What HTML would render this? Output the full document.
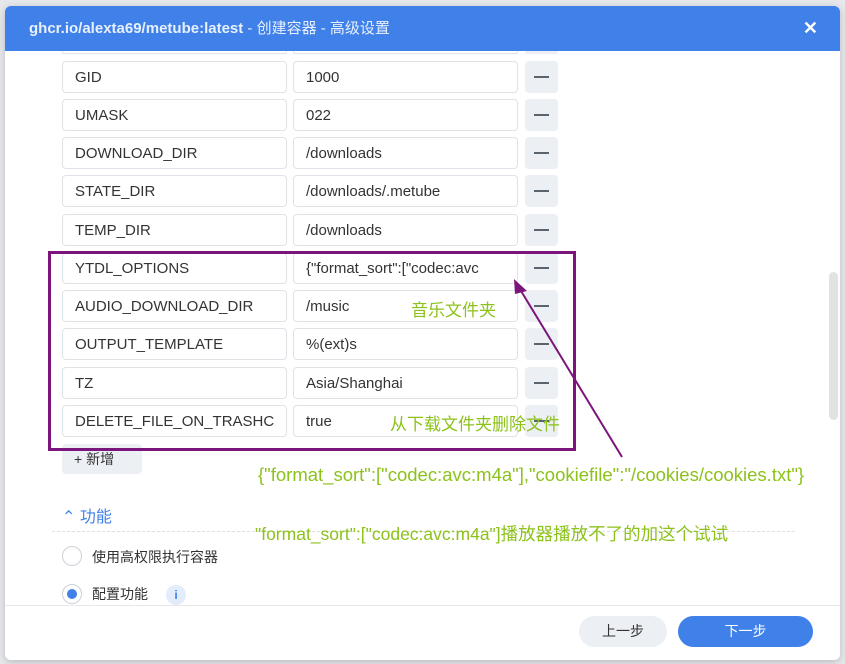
<!DOCTYPE html>
<html><head><meta charset="utf-8"><style>
*{box-sizing:border-box;margin:0;padding:0}
body{width:845px;height:664px;background:#e6e8eb;font-family:"Liberation Sans","Noto Sans CJK SC",sans-serif;position:relative;overflow:hidden}
.dlg{position:absolute;left:5px;top:6px;width:835px;height:654px;background:#fff;border-radius:6px;overflow:hidden;box-shadow:0 2px 8px rgba(0,0,0,.2)}
.hd{height:45px;background:#3f80e9;color:#e8f0fd;font-size:15px;font-weight:bold;line-height:45px;padding-left:24px;position:relative}
.hd .x{position:absolute;right:22px;top:0;font-size:18px;color:#fff}
.in{position:absolute;height:32px;border:1px solid #dfe2e6;border-radius:4px;font-family:"Liberation Sans",sans-serif;font-size:15px;color:#333;line-height:32px;padding-left:12px;overflow:hidden;white-space:nowrap;background:#fff}
.k{left:57px;width:225px}.v{left:288px;width:225px}
.m{position:absolute;left:520px;width:33px;height:32px;background:#eceff3;border-radius:4px}
.m:after{content:"";position:absolute;left:9px;top:15px;width:15px;height:2px;background:#5a636e}
.g{position:absolute;color:#8cc21a;font-size:17px;white-space:nowrap}
.btn{position:absolute;top:610px;height:31px;border-radius:16px;font-size:14px;text-align:center;line-height:31px}
</style></head><body>
<div class="dlg">
<div class="hd">ghcr.io/alexta69/metube:latest <span style="font-weight:normal">- 创建容器 - 高级设置</span><span class="x">✕</span></div>
</div>
<div style="position:absolute;left:0;top:0">
<div class="in k" style="top:51px;height:3px;left:62px;border-top:none"></div>
<div class="in v" style="top:51px;height:3px;left:293px;border-top:none"></div>
<div class="m" style="top:51px;height:3px;left:525px"></div>
</div>
<div style="position:absolute;left:5px;top:0">
<div class="in k" style="top:61px">GID</div><div class="in v" style="top:61px">1000</div><div class="m" style="top:61px"></div>
<div class="in k" style="top:99px">UMASK</div><div class="in v" style="top:99px">022</div><div class="m" style="top:99px"></div>
<div class="in k" style="top:137px">DOWNLOAD_DIR</div><div class="in v" style="top:137px">/downloads</div><div class="m" style="top:137px"></div>
<div class="in k" style="top:175px">STATE_DIR</div><div class="in v" style="top:175px">/downloads/.metube</div><div class="m" style="top:175px"></div>
<div class="in k" style="top:214px">TEMP_DIR</div><div class="in v" style="top:214px">/downloads</div><div class="m" style="top:214px"></div>
<div class="in k" style="top:252px">YTDL_OPTIONS</div><div class="in v" style="top:252px">{"format_sort":["codec:avc</div><div class="m" style="top:252px"></div>
<div class="in k" style="top:290px">AUDIO_DOWNLOAD_DIR</div><div class="in v" style="top:290px">/music</div><div class="m" style="top:290px"></div>
<div class="in k" style="top:328px">OUTPUT_TEMPLATE</div><div class="in v" style="top:328px">%(ext)s</div><div class="m" style="top:328px"></div>
<div class="in k" style="top:367px">TZ</div><div class="in v" style="top:367px">Asia/Shanghai</div><div class="m" style="top:367px"></div>
<div class="in k" style="top:405px">DELETE_FILE_ON_TRASHC</div><div class="in v" style="top:405px">true</div><div class="m" style="top:405px"></div>
</div>
<div style="position:absolute;left:62px;top:444px;width:80px;height:30px;background:#eceff3;border-radius:4px;font-size:14px;color:#333;line-height:30px;padding-left:12px">+ 新增</div>
<div style="position:absolute;left:62px;top:503px;font-size:16px;color:#3f80e9">⌃ 功能</div>
<div style="position:absolute;left:52px;top:531px;width:743px;border-top:1px dashed #dde0e4"></div>
<div style="position:absolute;left:62px;top:546px;width:20px;height:20px;border:1px solid #ccd0d6;border-radius:50%"></div>
<div style="position:absolute;left:92px;top:547px;font-size:14px;color:#333">使用高权限执行容器</div>
<div style="position:absolute;left:62px;top:584px;width:20px;height:20px;border:1px solid #ccd0d6;border-radius:50%"><div style="margin:4px;width:10px;height:10px;border-radius:50%;background:#3f80e9"></div></div>
<div style="position:absolute;left:92px;top:584px;font-size:14px;color:#333">配置功能</div>
<div style="position:absolute;left:166px;top:585px;width:20px;height:20px;border-radius:50%;background:#e3ecfb;color:#3f80e9;font-size:12px;text-align:center;line-height:20px;font-weight:bold">i</div>
<div style="position:absolute;left:5px;top:605px;width:835px;height:55px;background:#fff;border-top:1px solid #e5e7ea;border-radius:0 0 6px 6px"></div>
<div class="btn" style="left:579px;width:88px;background:#eceff3;color:#333;top:616px">上一步</div>
<div class="btn" style="left:678px;width:135px;background:#3f80e9;color:#fff;top:616px">下一步</div>
<div style="position:absolute;left:829px;top:272px;width:9px;height:148px;background:#e2e2e2;border-radius:5px"></div>
<div style="position:absolute;left:48px;top:251px;width:528px;height:200px;border:3px solid #7b157b"></div>
<svg style="position:absolute;left:0;top:0" width="845" height="664"><line x1="622" y1="457" x2="518" y2="286" stroke="#7b157b" stroke-width="2"/><polygon points="514,279 527,291 515,294" fill="#7b157b"/></svg>
<div class="g" style="left:411px;top:296px">音乐文件夹</div>
<div class="g" style="left:390px;top:410px">从下载文件夹删除文件</div>
<div class="g" style="left:258px;top:464px;font-size:18.5px">{"format_sort":["codec:avc:m4a"],"cookiefile":"/cookies/cookies.txt"}</div>
<div class="g" style="left:255px;top:521px;font-size:17.5px">"format_sort":["codec:avc:m4a"]播放器播放不了的加这个试试</div>
</body></html>
